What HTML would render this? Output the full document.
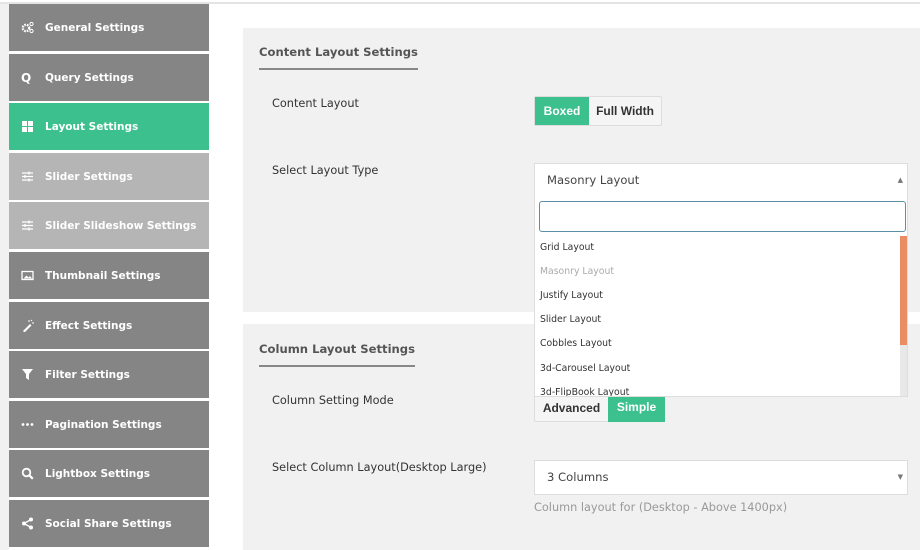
<!DOCTYPE html>
<html><head><meta charset="utf-8"><style>
*{box-sizing:border-box;margin:0;padding:0}
body{width:920px;height:550px;background:#fff;font-family:"DejaVu Sans","Liberation Sans",sans-serif;position:relative;overflow:hidden;color:#333}
.topline{position:absolute;left:0;top:2px;width:920px;height:2px;background:#e4e4e4}
.strip{position:absolute;left:0;top:4px;width:9px;height:546px;background:#f1f1f1}
.item{position:absolute;left:9px;width:200px;height:47px;background:#858585;color:#fff;font-weight:bold;font-size:10.5px;line-height:48px;padding-left:36px}
.item.g{background:#3bc08e}.item.l{background:#b5b5b5}
.ic{position:absolute;left:12px;top:17px;width:13px;height:13px}
.panel{position:absolute;left:243px;width:677px;background:#f1f1f1}
.h{position:absolute;left:16px;font-weight:bold;font-size:11.6px;color:#555;padding-bottom:9px;border-bottom:2px solid #888}
.lab{position:absolute;font-size:11.3px;color:#333}
.abs{position:absolute}
.sel{position:absolute;background:#fff;border:1px solid #ddd;font-size:11.6px;color:#444;padding-left:12px}
.opt{position:absolute;left:5px;font-size:9.3px;color:#333}
</style></head><body>
<div class="topline"></div><div class="strip"></div>

<div class="item" style="top:4px"><svg class="ic" viewBox="0 0 13 13"><circle cx="5" cy="7" r="3.2" fill="none" stroke="#fff" stroke-width="2.4" stroke-dasharray="1.6 1"/><circle cx="10.5" cy="3" r="1.6" fill="none" stroke="#fff" stroke-width="1"/><circle cx="10.5" cy="10" r="1.6" fill="none" stroke="#fff" stroke-width="1"/></svg>General Settings</div>
<div class="item" style="top:54px"><span class="ic" style="font-size:12px;line-height:13px;top:18px">Q</span>Query Settings</div>
<div class="item g" style="top:103px"><svg class="ic" viewBox="0 0 13 13"><rect x="1" y="1" width="5" height="5" fill="#fff"/><rect x="7" y="1" width="5" height="5" fill="#fff"/><rect x="1" y="7" width="5" height="5" fill="#fff"/><rect x="7" y="7" width="5" height="5" fill="#fff"/></svg>Layout Settings</div>
<div class="item l" style="top:153px"><svg class="ic" viewBox="0 0 13 13" stroke="#fff" stroke-width="1.3"><path d="M1 3h11M1 6.5h11M1 10h11M8 1.5v3M4 5v3M8 8.5v3"/></svg>Slider Settings</div>
<div class="item l" style="top:202px"><svg class="ic" viewBox="0 0 13 13" stroke="#fff" stroke-width="1.3"><path d="M1 3h11M1 6.5h11M1 10h11M8 1.5v3M4 5v3M8 8.5v3"/></svg>Slider Slideshow Settings</div>
<div class="item" style="top:252px"><svg class="ic" viewBox="0 0 13 13"><rect x="1" y="2.5" width="11" height="8" fill="none" stroke="#fff" stroke-width="1.3"/><path d="M2.5 9.5l3-3 2 2 1.5-1.5 2 2.5z" fill="#fff"/></svg>Thumbnail Settings</div>
<div class="item" style="top:302px"><svg class="ic" viewBox="0 0 13 13"><path d="M2 12l7-7 1.5 1.5-7 7z" fill="#fff"/><path d="M8 1v2M11 4h2M10 2l1-1" stroke="#fff"/></svg>Effect Settings</div>
<div class="item" style="top:351px"><svg class="ic" viewBox="0 0 13 13"><path d="M1 1h11L8 6v6L5 10V6z" fill="#fff"/></svg>Filter Settings</div>
<div class="item" style="top:401px"><svg class="ic" viewBox="0 0 13 13" fill="#fff"><circle cx="2" cy="6.5" r="1.4"/><circle cx="6.5" cy="6.5" r="1.4"/><circle cx="11" cy="6.5" r="1.4"/></svg>Pagination Settings</div>
<div class="item" style="top:450px"><svg class="ic" viewBox="0 0 13 13"><circle cx="5.5" cy="5.5" r="3.8" fill="none" stroke="#fff" stroke-width="1.8"/><path d="M8.3 8.3l3.5 3.5" stroke="#fff" stroke-width="2.2"/></svg>Lightbox Settings</div>
<div class="item" style="top:500px"><svg class="ic" viewBox="0 0 13 13"><circle cx="10" cy="2.5" r="2" fill="#fff"/><circle cx="3" cy="6.5" r="2" fill="#fff"/><circle cx="10" cy="10.5" r="2" fill="#fff"/><path d="M10 2.5L3 6.5l7 4" stroke="#fff" stroke-width="1.3" fill="none"/></svg>Social Share Settings</div>

<div class="panel" style="top:28px;height:284px">
 <div class="h" style="top:17px">Content Layout Settings</div>
 <div class="lab" style="left:29px;top:69px">Content Layout</div>
 <div class="lab" style="left:29px;top:136px">Select Layout Type</div>
</div>
<div class="panel" style="top:324px;height:226px">
 <div class="h" style="top:18px">Column Layout Settings</div>
 <div class="lab" style="left:29px;top:70px">Column Setting Mode</div>
 <div class="lab" style="left:29px;top:137px">Select Column Layout(Desktop Large)</div>
</div>

<div class="abs" style="left:534px;top:96px;width:128px;height:30px;border:1px solid #ddd;border-radius:2px;background:#f5f5f5;font-family:'Liberation Sans',sans-serif;font-weight:bold;font-size:12px">
 <div class="abs" style="left:0;top:0;width:54px;height:28px;background:#3bc08e;color:#fff;line-height:28px;text-align:center">Boxed</div>
 <div class="abs" style="left:54px;top:0;width:72px;height:28px;color:#333;line-height:28px;text-align:center">Full Width</div>
</div>

<div class="abs" style="left:534px;top:395px;width:131px;height:27px;border:1px solid #ddd;border-radius:2px;background:#f5f5f5;font-family:'Liberation Sans',sans-serif;font-weight:bold;font-size:12px">
 <div class="abs" style="left:0;top:0;width:73px;height:25px;color:#333;line-height:25px;text-align:center">Advanced</div>
 <div class="abs" style="left:73px;top:-1px;width:57px;height:27px;background:#3bc08e;color:#fff;line-height:25px;text-align:center">Simple</div>
</div>

<div class="sel" style="left:534px;top:163px;width:374px;height:35px;line-height:33px">Masonry Layout<span class="abs" style="right:4px;top:0;font-size:7px;color:#777">▲</span></div>
<div class="abs" style="left:534px;top:197px;width:374px;height:200px;background:#fff;border:1px solid #ddd;border-top:none;overflow:hidden">
 <div class="abs" style="left:4px;top:4px;width:367px;height:31px;border:1px solid #5b8fa8;border-radius:3px"></div>
 <div class="opt" style="top:45px">Grid Layout</div>
 <div class="opt" style="top:69px;color:#aaa">Masonry Layout</div>
 <div class="opt" style="top:93px">Justify Layout</div>
 <div class="opt" style="top:117px">Slider Layout</div>
 <div class="opt" style="top:141px">Cobbles Layout</div>
 <div class="opt" style="top:166px">3d-Carousel Layout</div>
 <div class="opt" style="top:190px">3d-FlipBook Layout</div>
 <div class="abs" style="left:365px;top:39px;width:8px;height:161px;background:#e8e8e8"></div>
 <div class="abs" style="left:365px;top:39px;width:8px;height:109px;background:#ea8d65"></div>
</div>

<div class="sel" style="left:534px;top:460px;width:374px;height:35px;line-height:33px">3 Columns<span class="abs" style="right:4px;top:0;font-size:7px;color:#777">▼</span></div>
<div class="lab" style="left:534px;top:501px;color:#999">Column layout for (Desktop - Above 1400px)</div>
</body></html>
